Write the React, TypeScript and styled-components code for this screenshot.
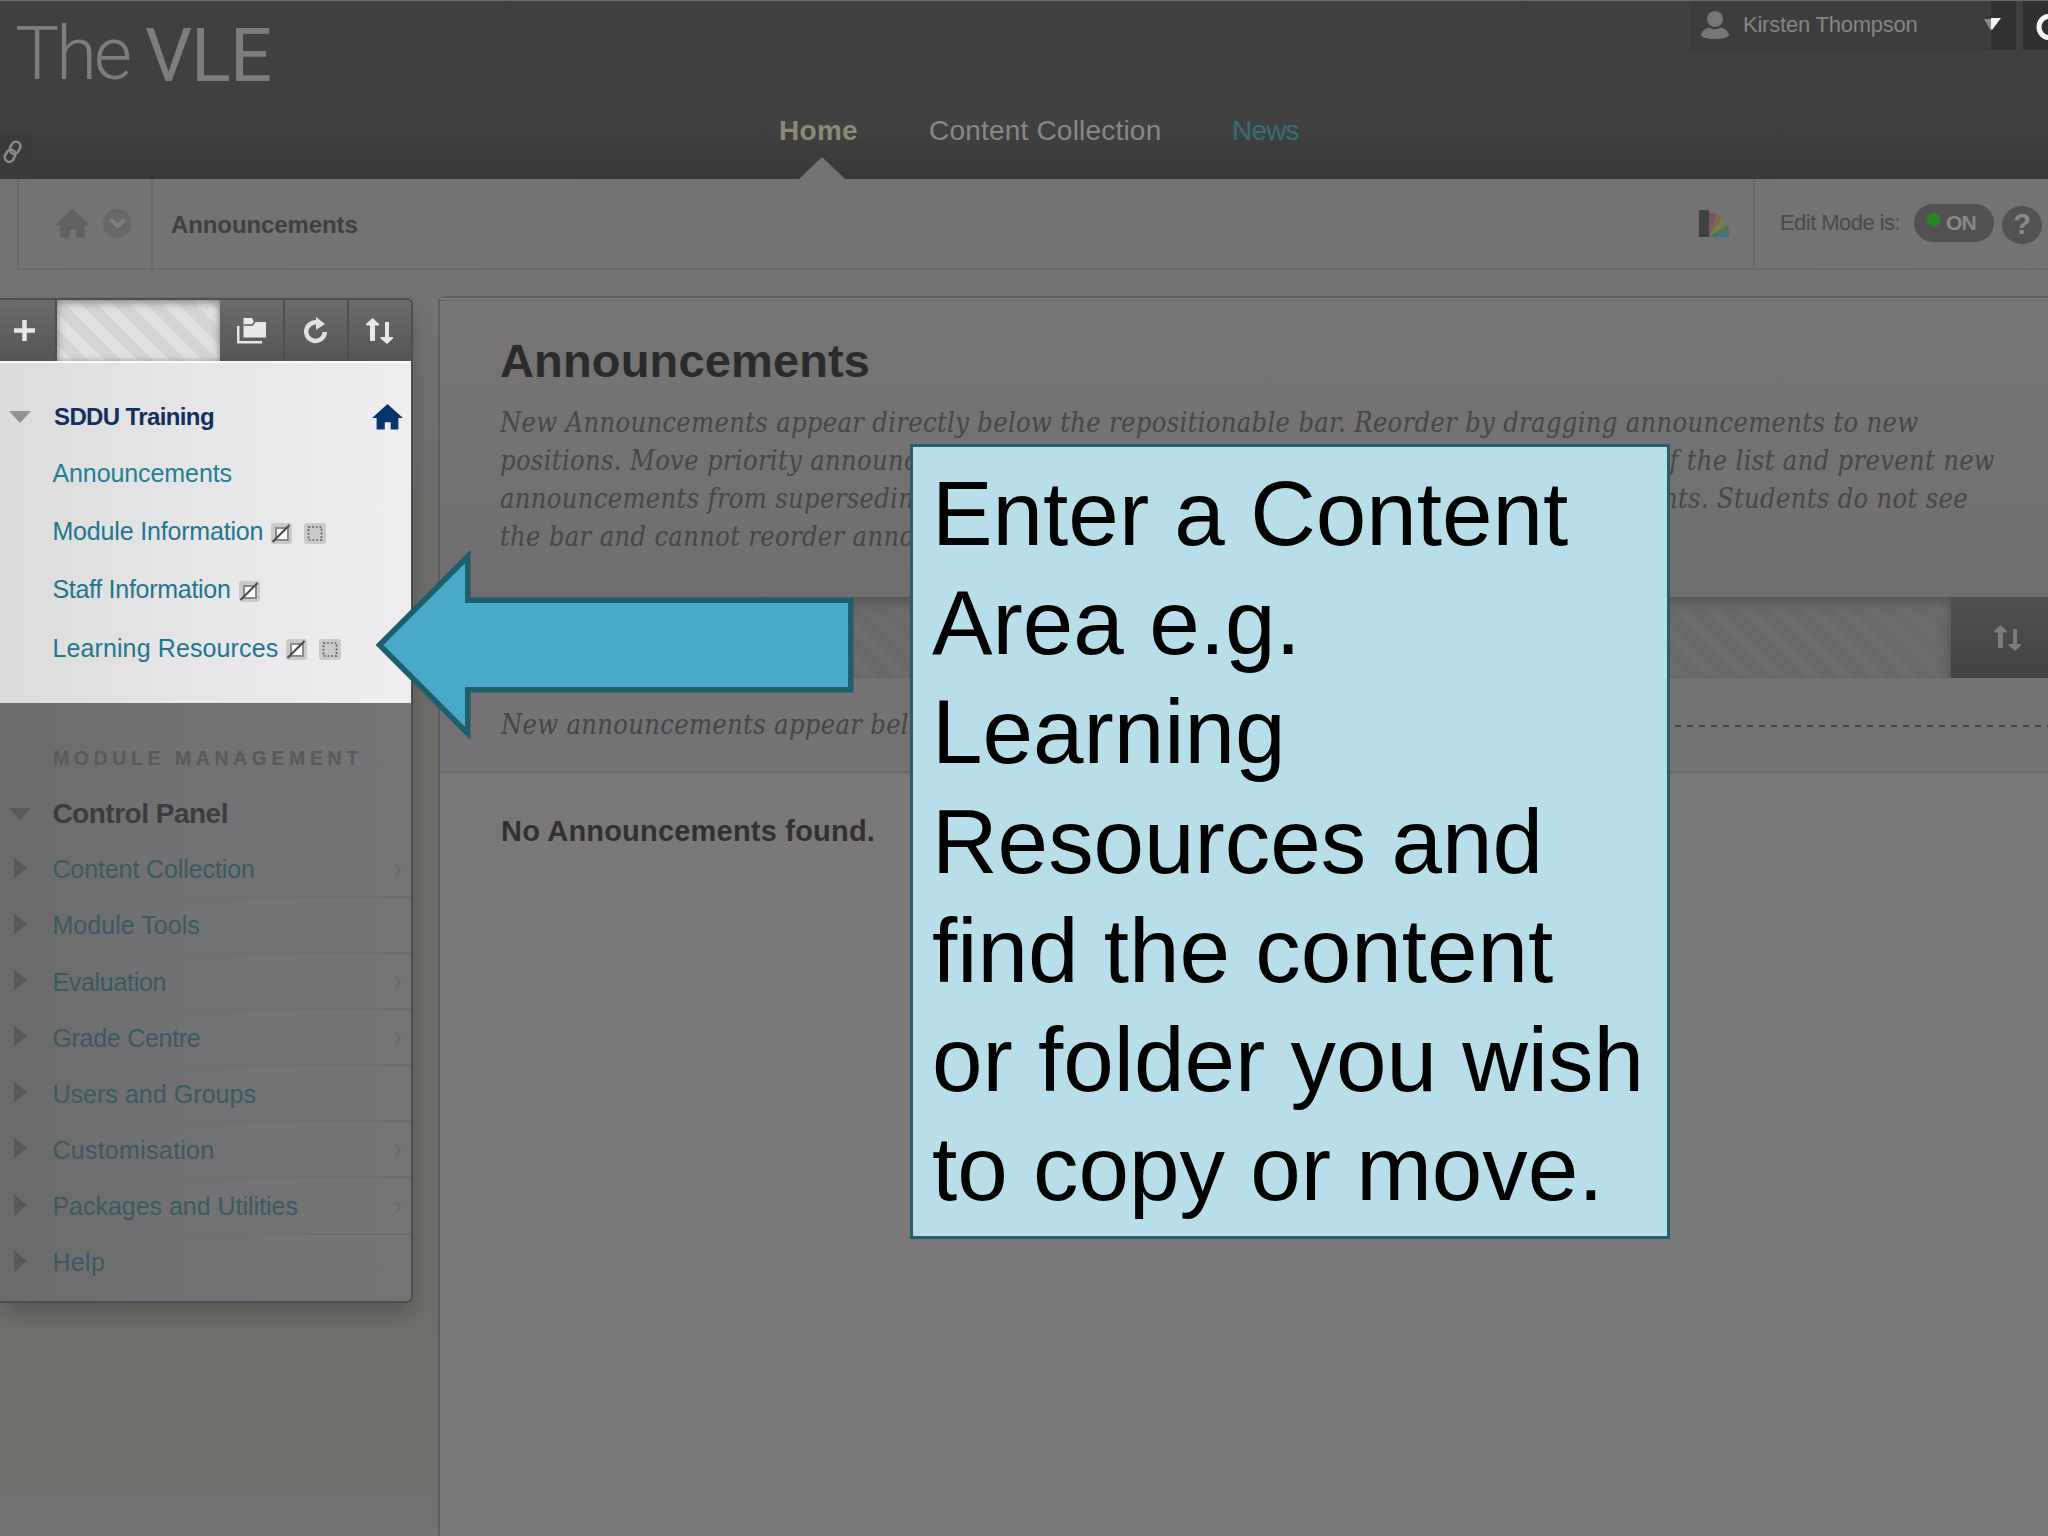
import React from "react";
import styled, { createGlobalStyle, css } from "styled-components";

const GlobalStyle = createGlobalStyle`
  * { box-sizing: border-box; }
  body { margin: 0; overflow: hidden; }
  h1, h2, p { margin: 0; }
`;

const sans = `"Liberation Sans", Arial, sans-serif`;

const Page = styled.div`
  position: relative;
  width: 2048px;
  height: 1536px;
  overflow: hidden;
  display: flex;
  flex-direction: column;
  background: linear-gradient(#737372 0, #747273 320px, #6f6e6b 520px, #6f6e6a 1280px, #737270 100%);
  font-family: ${sans};
  white-space: nowrap;
`;

const Label = styled.span<{ $size: number; $track?: number; $color: string; $bold?: boolean }>`
  font-size: ${(p) => p.$size}px;
  letter-spacing: ${(p) => p.$track ?? 0}px;
  color: ${(p) => p.$color};
  font-weight: ${(p) => (p.$bold ? 700 : 400)};
`;

/* ---------- header ---------- */

const Header = styled.header`
  height: 179px;
  flex: none;
  display: flex;
  justify-content: space-between;
  border-top: 1px solid #6a6c6a;
  background: linear-gradient(#404040 0%, #414141 70%, #3a393a 100%);
`;

const Brand = styled.div`
  width: 779px;
  display: flex;
  flex-direction: column;
  justify-content: space-between;
`;

const Logo = styled.div`
  display: flex;
  padding: 1px 0 0 15px;
  height: 110px;
  font-family: Roboto, ${sans};
  font-size: 74px;
  line-height: 104px;
  color: #7d7d7d;
`;

const LogoWord = styled.span<{ $weight: number; $track: number; $width?: number; $drop?: number }>`
  font-weight: ${(p) => p.$weight};
  letter-spacing: ${(p) => p.$track}px;
  width: ${(p) => (p.$width ? p.$width + "px" : "auto")};
  padding-top: ${(p) => p.$drop ?? 0}px;
`;

const LinkTab = styled.div`
  width: 32px;
  height: 46px;
  display: flex;
  padding: 7px 0 0 2px;
  background: #3b3b3b;
`;

const Nav = styled.nav`
  display: flex;
  align-items: flex-end;
  flex: 1;
`;

const NavItem = styled.div<{ $width: number }>`
  width: ${(p) => p.$width}px;
  display: flex;
  flex-direction: column;
  line-height: 32px;
  height: 64px;
`;

const Pointer = styled.div`
  width: 0;
  margin: 10px 0 0 20px;
  border: 23px solid transparent;
  border-top: 0;
  border-bottom: 22px solid #737373;
`;

const Account = styled.div`
  display: flex;
  align-items: flex-start;
  height: 50px;
`;

const UserBox = styled.div`
  width: 301px;
  height: 49px;
  display: flex;
  align-items: center;
  gap: 14px;
  padding: 0 0 2px 11px;
  background: #3d3d3d;
`;

const UserLabel = styled.div`
  padding-top: 1px;
  flex: 1;
`;

const UserEdge = styled.div`
  width: 25px;
  height: 49px;
  background: #333233;
`;

const PowerBox = styled.div`
  width: 25px;
  height: 49px;
  margin-left: 7px;
  background: #313031;
`;

/* ---------- breadcrumb bar ---------- */

const CrumbBar = styled.div`
  flex: none;
  height: 91px;
  margin-left: 17px;
  display: flex;
  border-left: 2px solid #696969;
  border-bottom: 2px solid #696768;
  background: linear-gradient(90deg, #727372, #747273);
`;

const CrumbHome = styled.div`
  width: 134px;
  display: flex;
  align-items: center;
  gap: 13px;
  padding-left: 36px;
  border-right: 2px solid #696969;
`;

const CrumbTitle = styled.div`
  flex: 1;
  display: flex;
  align-items: center;
  padding: 2px 0 0 18px;
`;

const ThemeSlot = styled.div`
  width: 56px;
  display: flex;
  align-items: center;
  border-right: 2px solid #696768;
`;

const EditSlot = styled.div`
  width: 293px;
  display: flex;
  align-items: center;
  padding: 0 0 2px 25px;
`;

const Pill = styled.div`
  width: 80px;
  height: 38px;
  margin-left: 14px;
  border-radius: 19px;
  display: flex;
  align-items: center;
  padding-left: 13px;
  gap: 6px;
  background: #525152;
`;

const Dot = styled.i`
  width: 13px;
  height: 13px;
  margin-bottom: 6px;
  border-radius: 50%;
  background: #2a842a;
  box-shadow: 0 0 3px #2a842a;
`;

const Help = styled.div`
  width: 40px;
  height: 38px;
  margin: 4px 0 0 8px;
  border-radius: 50%;
  display: flex;
  align-items: center;
  justify-content: center;
  background: #535253;
`;

/* ---------- body ---------- */

const Body = styled.div`
  flex: 1;
  display: flex;
  align-items: flex-start;
  padding-top: 26px;
`;

const Sidebar = styled.aside`
  width: 413px;
  height: 1005px;
  margin: 2px 25px 0 0;
  display: flex;
  flex-direction: column;
  overflow: hidden;
  border: solid #4f4e4f;
  border-width: 2px 2px 2px 0;
  border-radius: 0 6px 7px 0;
  box-shadow: 2px 12px 22px -4px rgba(50, 50, 50, 0.45);
`;

const Toolbar = styled.div`
  flex: none;
  height: 63px;
  display: flex;
  border-bottom: 2px solid #fbfbfb;
`;

const Tool = styled.div<{ $width: number; $nudge?: number }>`
  width: ${(p) => p.$width}px;
  display: flex;
  align-items: center;
  justify-content: center;
  padding-right: ${(p) => p.$nudge ?? 0}px;
  border-right: 2px solid #504f50;
  background: linear-gradient(#6d6c6d, #555354);
  &:last-child { border-right: 0; }
`;

const stripes = (a: string, b: string) => css`
  background: repeating-linear-gradient(45deg, ${a} 0 11.5px, ${b} 11.5px 23px);
`;

const Grip = styled.div`
  flex: 1;
  ${stripes("#e1e1e1", "#d5d5d5")}
  box-shadow: inset 0 3px 9px rgba(110, 110, 110, 0.65), inset 0 0 4px rgba(130, 130, 130, 0.5);
`;

const CourseMenu = styled.div`
  flex: none;
  height: 340px;
  padding-top: 26px;
  background: linear-gradient(90deg, #dcdcdc, #e6e5e7 45%, #efedf0);
`;

const MenuRow = styled.div<{ $height: number; $divider?: boolean }>`
  height: ${(p) => p.$height}px;
  display: flex;
  align-items: center;
  padding-right: 8px;
  ${(p) =>
    p.$divider &&
    css`
      background: linear-gradient(90deg, transparent 25%, #6c6b6d 95%) bottom / 100% 2px no-repeat;
    `}
`;

const Marker = styled.div<{ $width?: number }>`
  width: ${(p) => p.$width ?? 52.4}px;
  flex: none;
  display: flex;
`;

const ArrowDown = styled.i<{ $color: string }>`
  margin: 0 0 1px 9px;
  border: 11px solid transparent;
  border-bottom: 0;
  border-top: 12px solid ${(p) => p.$color};
`;

const ArrowRight = styled.i`
  margin: 0 0 4px 14px;
  border: 11px solid transparent;
  border-right: 0;
  border-left: 13px solid #59595a;
`;

const RowText = styled.div`
  flex: 1;
`;

const Badges = styled.div`
  flex: 1;
  display: flex;
  gap: 12px;
  padding: 3px 0 0 8px;
`;

const Management = styled.div`
  flex: 1;
  padding-top: 36px;
  background: linear-gradient(90deg, #6b6b6b, #717072 35%, #757376);
`;

const Caption = styled.div`
  height: 48px;
  padding-left: 53px;
  line-height: 39px;
`;

const Main = styled.main`
  flex: 1;
  height: 1240px;
  border-left: 2px solid #5f5e5e;
  border-top: 2px solid #605f60;
  border-top-left-radius: 6px;
  background: #7a7778;
`;

const Intro = styled.section`
  height: 299px;
  padding: 32px 0 0 60px;
  border-top: 2px solid #7b7979;
  box-shadow: inset 0 2px 0 -1px #676566;
  background: linear-gradient(#767475, #737172 60%, #706e70);
`;

const Title = styled.h1`
  height: 72px;
  line-height: 58px;
  font-size: 47px;
  letter-spacing: 0.15px;
  color: #2c2b2c;
`;

const serif = css`
  font-family: "DejaVu Serif Condensed", "DejaVu Serif", serif;
  font-stretch: condensed;
  font-style: italic;
  font-size: 27px;
  letter-spacing: 0.35px;
`;

const IntroLine = styled.p<{ $width: number }>`
  ${serif}
  width: ${(p) => p.$width}px;
  line-height: 38px;
  height: 38px;
  display: flex;
  justify-content: space-between;
  color: #484749;
`;

const Bar = styled.div`
  height: 81px;
  display: flex;
`;

const BarGrip = styled.div`
  flex: 1;
  ${stripes("#6d6b6d", "#6a686a")}
  box-shadow: inset -3px 6px 8px #5a585a;
`;

const BarTool = styled.div`
  width: 97px;
  display: flex;
  align-items: center;
  padding-left: 43px;
  background: linear-gradient(#514f51, #434143);
`;

const Notice = styled.div`
  ${serif}
  height: 95px;
  display: flex;
  align-items: center;
  gap: 20px;
  padding-left: 61px;
  color: #474648;
  border-bottom: 2px solid #696768;
  background: #747274;
`;

const Dashes = styled.div`
  flex: 1;
  height: 2px;
  margin-top: 2px;
  background: repeating-linear-gradient(90deg, #484648 0 6px, transparent 6px 12px);
`;

const Empty = styled.h2`
  padding: 41px 0 0 61px;
  font-size: 29px;
  line-height: 34px;
  letter-spacing: 0.2px;
  color: #323132;
`;

/* ---------- annotations ---------- */

const PointerArrow = styled.svg`
  position: absolute;
  left: 370px;
  top: 540px;
`;

const Callout = styled.div`
  position: absolute;
  left: 910px;
  top: 444px;
  width: 760px;
  height: 795px;
  padding: 12px 0 0 19px;
  border: 3px solid #245f6b;
  background: #b8deea;
  color: #000;
  font-size: 90.85px;
  line-height: 109.2px;
`;

/* ---------- icons ---------- */

const House = ({ size, color }: { size: number; color: string }) => (
  <svg width={size} height={size * 0.82} viewBox="0 0 34 28">
    <path fill={color} d="M17 0 34 15.500H29V28H20.500V20H14V28H5V15.500H0Z" />
  </svg>
);

const SwapIcon = ({ color }: { color: string }) => (
  <svg width="28" height="26" viewBox="0 0 28 26">
    <path fill={color} d="M6.500 0 13 6V7.500H9V23H4V7.500H0V6ZM19 4H23V19H27V20.500L21 26 14.500 20.500V19H19Z" />
  </svg>
);

const HiddenBadge = () => (
  <svg width="21" height="21" viewBox="0 0 21 21">
    <rect width="21" height="21" rx="3" fill="#cbcacb" />
    <rect x="5" y="5" width="12" height="12" fill="#fff" stroke="#8b8a8b" strokeWidth="2" />
    <path d="M1.500 19 18.500 2" stroke="#4b4b4b" strokeWidth="2.200" />
  </svg>
);

const EmptyBadge = () => (
  <svg width="22" height="21" viewBox="0 0 22 21">
    <rect width="22" height="21" rx="3" fill="#cbcacb" />
    <rect x="4.500" y="4" width="13" height="13" fill="none" stroke="#555" strokeWidth="1.700" strokeDasharray="1.700 2" />
  </svg>
);

const courseItems = [
  { label: "Module Information", track: -0.17, empty: true },
  { label: "Staff Information", track: -0.28, empty: false },
  { label: "Learning Resources", track: 0.12, empty: true },
];

const panelItems = [
  { label: "Content Collection", track: -0.1, more: true },
  { label: "Module Tools", track: 0.05, more: false },
  { label: "Evaluation", track: -0.3, more: true },
  { label: "Grade Centre", track: -0.28, more: true },
  { label: "Users and Groups", track: 0.05, more: false },
  { label: "Customisation", track: 0.27, more: true },
  { label: "Packages and Utilities", track: -0.02, more: true },
  { label: "Help", track: 0.35, more: false },
];

export default function App() {
  return (
    <Page>
      <GlobalStyle />
      <Header>
        <Brand>
          <Logo>
            <LogoWord $weight={300} $track={-3} $width={130}>The</LogoWord>
            <LogoWord $weight={400} $track={-1} $drop={2}>VLE</LogoWord>
          </Logo>
          <LinkTab>
            <svg width="21" height="24" viewBox="0 0 21 24" fill="none" stroke="#898989" strokeWidth="2.500">
              <rect x="8.500" y="1.500" width="9" height="12.500" rx="4.500" transform="rotate(28 13 8)" />
              <rect x="3.500" y="9.500" width="9" height="12.500" rx="4.500" transform="rotate(28 8 16)" />
            </svg>
          </LinkTab>
        </Brand>
        <Nav>
          <NavItem $width={150}>
            <Label $size={28} $track={0.3} $color="#8b8b75" $bold>Home</Label>
            <Pointer />
          </NavItem>
          <NavItem $width={303}>
            <Label $size={28} $track={0.2} $color="#888788">Content Collection</Label>
          </NavItem>
          <NavItem $width={100}>
            <Label $size={28} $track={-0.8} $color="#366d76">News</Label>
          </NavItem>
        </Nav>
        <Account>
          <UserBox>
            <svg width="28" height="28" viewBox="0 0 28 28" fill="#767676">
              <circle cx="14" cy="8" r="8" />
              <path d="M0 24C1 19 6 17 8 16.500Q14 20 20 16.500C22 17 27 19 28 24Q27 28 14 28T0 24Z" />
            </svg>
            <UserLabel>
              <Label $size={22} $track={-0.22} $color="#858585">Kirsten Thompson</Label>
            </UserLabel>
            <svg width="7" height="12" viewBox="0 0 7 12">
              <path d="M0 0H7V12Z" fill="#8a8a8a" />
            </svg>
          </UserBox>
          <UserEdge>
            <svg width="10" height="30" viewBox="0 0 10 30">
              <path d="M0 17H10L1 29 0 28Z" fill="#f4f4f4" />
            </svg>
          </UserEdge>
          <PowerBox>
            <svg width="25" height="49" viewBox="0 0 25 49">
              <path d="M26 15.500A10 10.500 0 0 0 26 36.500" fill="none" stroke="#f4f4f4" strokeWidth="5" />
            </svg>
          </PowerBox>
        </Account>
      </Header>

      <CrumbBar>
        <CrumbHome>
          <House size={35} color="#626262" />
          <svg width="29" height="29" viewBox="0 0 29 29">
            <circle cx="14.500" cy="14.500" r="14.500" fill="#686868" />
            <path d="M7.500 10.500 14.500 17 21.500 10.500" fill="none" stroke="#7d7d7d" strokeWidth="4" />
          </svg>
        </CrumbHome>
        <CrumbTitle>
          <Label $size={24} $track={-0.1} $color="#403f41" $bold>Announcements</Label>
        </CrumbTitle>
        <ThemeSlot>
          <svg width="30" height="28" viewBox="0 0 30 28">
            <path d="M10 27V2Q15 2 19 5Z" fill="#7a5562" />
            <path d="M10 27 18 4Q22 6 24 9Z" fill="#80694d" />
            <path d="M10 27 23 8Q27 12 28 16Z" fill="#767d4c" />
            <path d="M10 27 28 15Q30 18 30 21Z" fill="#4f7555" />
            <path d="M10 27 30 20V27Z" fill="#47737c" />
            <rect width="10" height="27" fill="#414042" />
          </svg>
        </ThemeSlot>
        <EditSlot>
          <Label $size={22} $track={-0.55} $color="#4b4a4b">Edit Mode is:</Label>
          <Pill>
            <Dot />
            <Label $size={21} $track={-0.8} $color="#8a898b" $bold>ON</Label>
          </Pill>
          <Help>
            <Label $size={29} $color="#8a898a" $bold>?</Label>
          </Help>
        </EditSlot>
      </CrumbBar>

      <Body>
        <Sidebar>
          <Toolbar>
            <Tool $width={57} $nudge={6}>
              <svg width="21" height="21" viewBox="0 0 21 21">
                <path d="M10.500 0V21M0 10.500H21" stroke="#e8e8e8" strokeWidth="4.500" />
              </svg>
            </Tool>
            <Grip />
            <Tool $width={65}>
              <svg width="30" height="26" viewBox="0 0 30 26" fill="#e8e8e8">
                <path d="M6.500 0H15L17 4H29V19.500H6.500Z" />
                <path d="M0 8H2.500V23H25V25.500H0Z" />
                <path d="M6.500 7H15.500L18 3.500" fill="none" stroke="#5f5e5f" strokeWidth="1.500" />
              </svg>
            </Tool>
            <Tool $width={64}>
              <svg width="26" height="28" viewBox="0 0 26 28">
                <path d="M17.500 6.800A9.300 9.300 0 1 0 21.800 15" fill="none" stroke="#e0e0e0" strokeWidth="4.500" />
                <path d="M13 0 22 7 13 13Z" fill="#e0e0e0" />
              </svg>
            </Tool>
            <Tool $width={62}>
              <SwapIcon color="#e8e8e8" />
            </Tool>
          </Toolbar>
          <CourseMenu>
            <MenuRow $height={56}>
              <Marker $width={54}><ArrowDown $color="#929292" /></Marker>
              <RowText>
                <Label $size={24} $track={-0.62} $color="#12305f" $bold>SDDU Training</Label>
              </RowText>
              <House size={31} color="#06346c" />
            </MenuRow>
            <MenuRow $height={57.4}>
              <Marker />
              <Label $size={25} $track={-0.08} $color="#237f93">Announcements</Label>
            </MenuRow>
            {courseItems.map((item) => (
              <MenuRow key={item.label} $height={58.4}>
                <Marker />
                <Label $size={25} $track={item.track} $color="#1f7690">{item.label}</Label>
                <Badges>
                  <HiddenBadge />
                  {item.empty && <EmptyBadge />}
                </Badges>
              </MenuRow>
            ))}
          </CourseMenu>
          <Management>
            <Caption>
              <Label $size={19.5} $track={4.58} $color="#5b5a5b" $bold>MODULE MANAGEMENT</Label>
            </Caption>
            <MenuRow $height={54.7}>
              <Marker><ArrowDown $color="#59595a" /></Marker>
              <Label $size={28} $track={-0.5} $color="#3c3b3e" $bold>Control Panel</Label>
            </MenuRow>
            {panelItems.map((item, i) => (
              <MenuRow key={item.label} $height={56.14} $divider={i < panelItems.length - 1}>
                <Marker><ArrowRight /></Marker>
                <RowText>
                  <Label $size={25} $track={item.track} $color="#3a5c60">{item.label}</Label>
                </RowText>
                {item.more && (
                  <svg width="8" height="12" viewBox="0 0 8 12">
                    <path d="M1 1 5 6 1 11" fill="none" stroke="#69686a" strokeWidth="2" />
                  </svg>
                )}
              </MenuRow>
            ))}
          </Management>
        </Sidebar>

        <Main>
          <Intro>
            <Title>Announcements</Title>
            <IntroLine $width={1417}>
              <span>New Announcements appear directly below the repositionable bar. Reorder by dragging announcements to new</span>
            </IntroLine>
            <IntroLine $width={1495}>
              <span>positions. Move priority announcements above the bar</span>
              <span>to the top of the list and prevent new</span>
            </IntroLine>
            <IntroLine $width={1468}>
              <span>announcements from superseding priority content</span>
              <span>to students. Students do not see</span>
            </IntroLine>
            <IntroLine $width={900}>
              <span>the bar and cannot reorder announcements.</span>
            </IntroLine>
          </Intro>
          <Bar>
            <BarGrip />
            <BarTool><SwapIcon color="#7c7a7c" /></BarTool>
          </Bar>
          <Notice>
            <span>New announcements appear below this line</span>
            <Dashes />
          </Notice>
          <Empty>No Announcements found.</Empty>
        </Main>
      </Body>

      <PointerArrow width="490" height="210" viewBox="370 540 490 210">
        <path
          d="M379.500 645 467.800 556.500V600.300H850.800V689.700H467.800V733.500Z"
          fill="#4aabc9"
          stroke="#1f5e6b"
          strokeWidth="5.500"
        />
      </PointerArrow>
      <Callout>
        Enter a Content<br />Area e.g.<br />Learning<br />Resources and<br />find the content<br />or folder you wish<br />to copy or move.
      </Callout>
    </Page>
  );
}
